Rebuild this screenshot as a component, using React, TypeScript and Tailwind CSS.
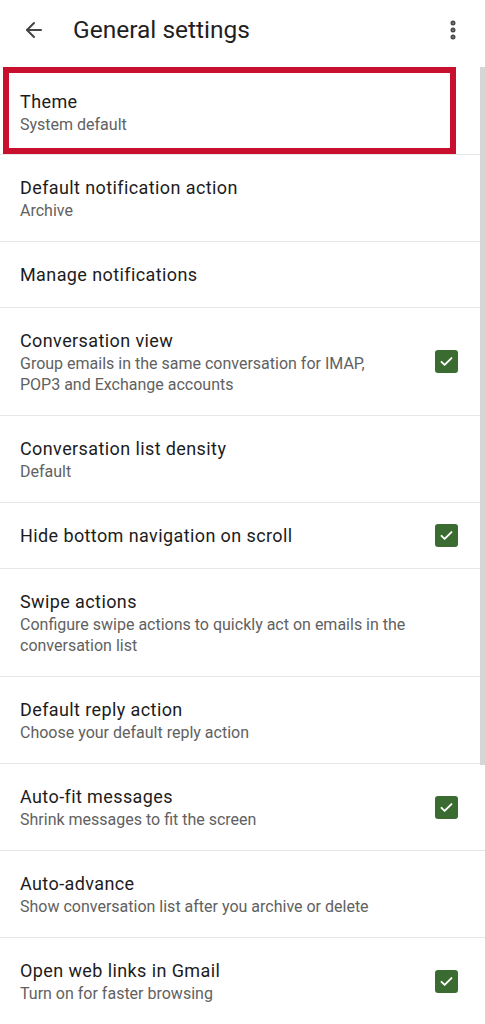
import { ArrowLeft, EllipsisVertical } from "lucide-react";

type Item = {
  title: string;
  sub?: string;
  checked?: boolean;
};

const items: Item[] = [
  { title: "Default notification action", sub: "Archive" },
  { title: "Manage notifications" },
  {
    title: "Conversation view",
    sub: "Group emails in the same conversation for IMAP, POP3 and Exchange accounts",
    checked: true,
  },
  { title: "Conversation list density", sub: "Default" },
  { title: "Hide bottom navigation on scroll", checked: true },
  {
    title: "Swipe actions",
    sub: "Configure swipe actions to quickly act on emails in the conversation list",
  },
  { title: "Default reply action", sub: "Choose your default reply action" },
  { title: "Auto-fit messages", sub: "Shrink messages to fit the screen", checked: true },
  { title: "Auto-advance", sub: "Show conversation list after you archive or delete" },
  { title: "Open web links in Gmail", sub: "Turn on for faster browsing", checked: true },
];

const Check = () => (
  <div className="w-[23px] h-[23px] shrink-0 rounded-[3px] bg-[#3a6b31] flex items-center justify-center">
    <svg width="15" height="15" viewBox="0 0 24 24" fill="none">
      <path d="M4 12.5l5 5L20 6.5" stroke="white" strokeWidth="3" strokeLinecap="round" strokeLinejoin="round" />
    </svg>
  </div>
);

const Row = ({ item, last }: { item: Item; last?: boolean }) => (
  <div className={`flex items-center pl-[20px] pr-[27px] py-[20px] ${last ? "" : "border-b border-[#e6e6e6]"}`}>
    <div className="flex-1 min-w-0 pr-[30px]">
      <div className="text-[18px] leading-[25px] tracking-[0.4px] text-[#1c1c1c]">{item.title}</div>
      {item.sub && <div className="text-[16px] leading-[21px] text-[#616161]">{item.sub}</div>}
    </div>
    {item.checked && <Check />}
  </div>
);

export default function App() {
  return (
    <div className="relative w-[485px] h-[1024px] overflow-hidden bg-white font-['Roboto','Liberation_Sans',sans-serif]">
      <div className="h-[68px] flex items-center pl-[22px] pr-[20px] pb-[8px]">
        <ArrowLeft size={24} strokeWidth={2} className="text-[#444]" />
        <div className="ml-[27px] flex-1 text-[24.5px] text-[#1f1f1f]">General settings</div>
        <EllipsisVertical size={24} strokeWidth={3} className="text-[#4a4a4a]" />
      </div>

      <div className="relative border-b border-[#e6e6e6] pl-[20px] pr-[27px] pt-[21px] pb-[19px]">
        <div className="text-[18px] leading-[25px] tracking-[0.4px] text-[#1c1c1c]">Theme</div>
        <div className="text-[16px] leading-[21px] text-[#616161]">System default</div>
        <div className="absolute left-[3px] top-[-1px] w-[453px] h-[87px] border-[6px] border-[#c8102e]" />
      </div>

      {items.map((it, i) => (
        <Row key={it.title} item={it} last={i === items.length - 1} />
      ))}

      <div className="absolute right-0 top-[67px] w-[5px] h-[698px] bg-[#d6d6d6]" />
    </div>
  );
}
